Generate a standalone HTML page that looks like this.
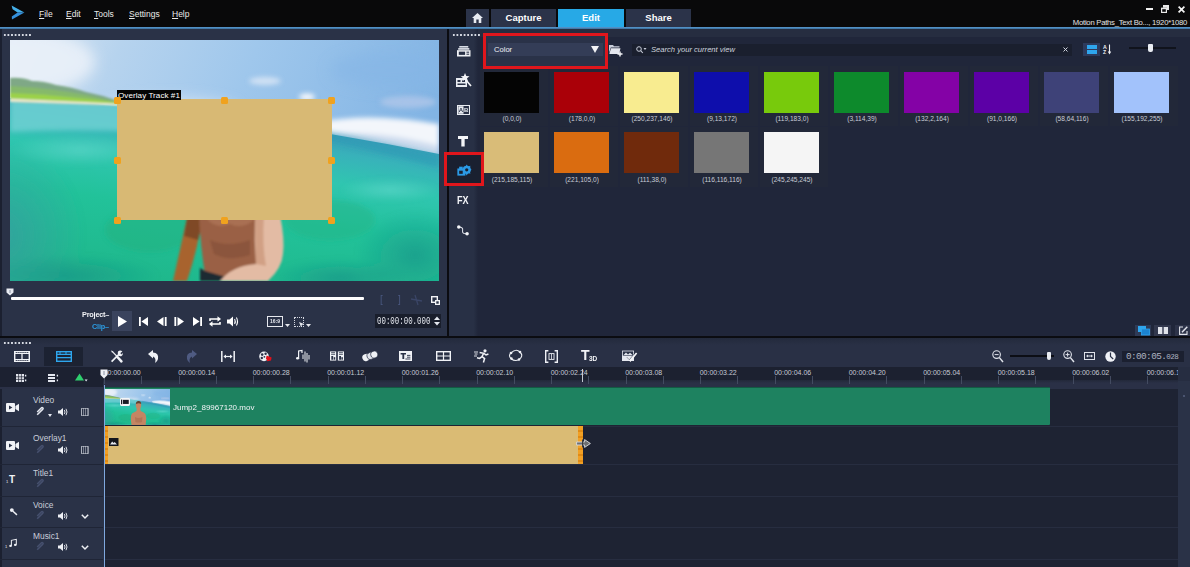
<!DOCTYPE html>
<html lang="en">
<head>
<meta charset="utf-8">
<title>Video Editor</title>
<style>
*{box-sizing:border-box;margin:0;padding:0}
html,body{width:1190px;height:567px;overflow:hidden;background:#1f2435;font-family:"Liberation Sans",sans-serif;color:#e8eaf0}
#app{position:relative;width:1190px;height:567px;overflow:hidden;background:#1f2435}
#app div,#app span,#app svg{position:absolute;white-space:nowrap}
#app svg{overflow:visible}
#top{left:0;top:0;width:1190px;height:28px;background:#09090a}
#topline{left:0;top:27px;width:1190px;height:2px;background:linear-gradient(#5a9bd2,#386d99)}
.menu{top:9px;font-size:8.5px;color:#e9e9e9;line-height:10px}
.menu u{text-decoration:underline}
.tab{top:9px;height:18px;background:#2b3349;color:#fff;font-size:9.5px;font-weight:bold;text-align:center;line-height:18px}
#prev{left:0;top:29px;width:448px;height:307px;background:#2a3247}
#lib{left:450px;top:29px;width:740px;height:307px;background:#20263a}
#side{left:-1px;top:0;width:29px;height:307px;background:linear-gradient(90deg,#283045 0,#283045 85%,#20263a 100%)}
#tl{left:0;top:338px;width:1190px;height:229px;background:#1e2333}
.grip{height:2px;width:29px;background-image:radial-gradient(circle,#d5d9e2 0.8px,rgba(213,217,226,0) 1.15px);background-size:3.6px 2px}
.cell{width:68px;height:60px;background:#222839}
.sw{width:55px;height:41px}
.swl{font-size:6.6px;color:#c9cdd7;text-align:center;width:70px;line-height:8px}
.tname{font-size:8.4px;color:#c9ced9;left:33px;line-height:9px;margin-top:1.5px}
.rt{top:3px;font-size:7px;color:#c6cad4;line-height:8px}
.tick{top:10px;width:1px;height:8px;background:#434b61}
.hline{left:104px;width:1074px;height:1px;background:#272d40}
.hd{width:7px;height:7px;background:#f0a21e;border-radius:1.5px;margin:-0.5px 0 0 -0.5px}
.lcd{font-family:"Liberation Mono",monospace;color:#c3c8d3}
</style>
</head>
<body>
<div id="app">

<div id="top">
<svg style="left:11px;top:5px" width="14" height="15" viewBox="0 0 14 15"><path d="M0.6 0.6 L13.4 7.4 L6.6 7.6 L1.6 4.2 Z" fill="#45b0ea"/><path d="M13.4 7.4 L1 14.6 L0.8 11.4 L6.6 7.6 Z" fill="#3590dc"/></svg>
<span class="menu" style="left:39px"><u>F</u>ile</span>
<span class="menu" style="left:66px"><u>E</u>dit</span>
<span class="menu" style="left:94px"><u>T</u>ools</span>
<span class="menu" style="left:129px"><u>S</u>ettings</span>
<span class="menu" style="left:172px"><u>H</u>elp</span>
<div class="tab" style="left:466px;width:23px"><svg style="left:6px;top:4px" width="11" height="10" viewBox="0 0 11 10"><path d="M5.5 0 L11 5 L9.3 5 L9.3 10 L6.7 10 L6.7 6.5 L4.3 6.5 L4.3 10 L1.7 10 L1.7 5 L0 5 Z" fill="#e8ebf2"/></svg></div>
<div class="tab" style="left:491px;width:65px">Capture</div>
<div class="tab" style="left:558px;width:66px;background:#27a9e6">Edit</div>
<div class="tab" style="left:626px;width:65px">Share</div>
<div style="left:1146px;top:8px;width:7px;height:2px;background:#f0f0f0"></div>
<svg style="left:1161px;top:5px" width="8" height="8" viewBox="0 0 8 8"><path d="M2 0 H8 V5 H6 V2.8 H2 Z" fill="#e8e8e8"/><rect x="0.6" y="3.4" width="4.8" height="4" fill="none" stroke="#e8e8e8" stroke-width="1.2"/><rect x="0" y="2.8" width="6" height="1.4" fill="#e8e8e8"/></svg>
<svg style="left:1178px;top:6px" width="7" height="7" viewBox="0 0 7 7"><path d="M0.6 0.6 L6.4 6.4 M6.4 0.6 L0.6 6.4" stroke="#f4f4f4" stroke-width="1.7"/></svg>
<span class="menu" style="right:3px;top:17.5px;font-size:7.7px;color:#e4e4e4;letter-spacing:-0.25px">Motion Paths_Text Bo..., 1920*1080</span>
</div>
<div id="topline"></div>

<div id="prev">
<div style="left:0;top:0;width:2px;height:307px;background:#1b2030"></div>
<div class="grip" style="left:3px;top:5px"></div>
<div id="video" style="left:10px;top:11px;width:429px;height:241px;overflow:hidden;background:#2fbfa5">
<svg class="scene" width="429" height="241" viewBox="0 0 429 241" preserveAspectRatio="none">
<defs>
<linearGradient id="skya" x1="0" y1="0" x2="1" y2="0.25"><stop offset="0" stop-color="#d9e5f2"/><stop offset="0.25" stop-color="#b6d3ee"/><stop offset="0.55" stop-color="#9fc7ec"/><stop offset="1" stop-color="#82b4e4"/></linearGradient>
<linearGradient id="seaa" gradientUnits="userSpaceOnUse" x1="215" y1="82" x2="193" y2="245"><stop offset="0" stop-color="#3a9fb8"/><stop offset="0.1" stop-color="#38b2ba"/><stop offset="0.28" stop-color="#30c6b0"/><stop offset="0.55" stop-color="#22c29a"/><stop offset="1" stop-color="#1fb88c"/></linearGradient>
<radialGradient id="lea" cx="0.5" cy="0.5" r="0.5"><stop offset="0" stop-color="#3f93a6" stop-opacity="0.6"/><stop offset="0.5" stop-color="#3f93a6" stop-opacity="0.3"/><stop offset="1" stop-color="#3f93a6" stop-opacity="0"/></radialGradient>
<filter id="bxa" x="-30%" y="-30%" width="160%" height="160%"><feGaussianBlur stdDeviation="7"/></filter>
<radialGradient id="dka" cx="0.5" cy="0.5" r="0.5"><stop offset="0" stop-color="#178a86" stop-opacity="0.55"/><stop offset="1" stop-color="#178a86" stop-opacity="0"/></radialGradient>
<radialGradient id="lta" cx="0.5" cy="0.5" r="0.5"><stop offset="0" stop-color="#63d8cc" stop-opacity="0.6"/><stop offset="1" stop-color="#63d8cc" stop-opacity="0"/></radialGradient>
<filter id="bla" x="-20%" y="-20%" width="140%" height="140%"><feGaussianBlur stdDeviation="2.4"/></filter>
<filter id="bsa" x="-20%" y="-20%" width="140%" height="140%"><feGaussianBlur stdDeviation="0.8"/></filter>
</defs>
<rect width="429" height="241" fill="url(#skya)"/>
<g filter="url(#bxa)">
<ellipse cx="10" cy="22" rx="75" ry="32" fill="#eaf1f8" opacity="0.9"/>
<ellipse cx="160" cy="72" rx="70" ry="14" fill="#dbe7f4" opacity="0.8"/>
<ellipse cx="380" cy="30" rx="60" ry="18" fill="#86b5e6" opacity="0.6"/>
</g>
<g filter="url(#bla)">
<ellipse cx="255" cy="41" rx="16" ry="4" fill="#dde8f6" opacity="0.8"/>
<ellipse cx="297" cy="57" rx="8" ry="3.5" fill="#f6f8fc"/>
<ellipse cx="398" cy="62" rx="28" ry="6" fill="#b5c9ea" opacity="0.7"/>
<path d="M310 82 Q360 72 429 84 L429 116 L322 96 Z" fill="#f3f6fb"/>
<path d="M322 93 Q380 92 429 106 L429 118 L322 99 Z" fill="#cddbee"/>
</g>
<path d="M0 58 Q210 70 429 114 L429 241 L0 241 Z" fill="url(#seaa)"/>
<g filter="url(#bla)">
<path d="M250 80 Q340 94 429 115 L429 128 Q340 104 250 88 Z" fill="#2c98b6" opacity="0.5"/>
<path d="M0 58 Q100 60 230 76 L230 100 Q100 86 0 92 Z" fill="#6ed0d2" opacity="0.85"/>
<ellipse cx="-10" cy="195" rx="85" ry="95" fill="url(#lea)"/>
<ellipse cx="60" cy="236" rx="90" ry="22" fill="url(#dka)"/>
<ellipse cx="405" cy="215" rx="60" ry="45" fill="url(#dka)"/>
<ellipse cx="330" cy="238" rx="70" ry="20" fill="url(#dka)"/>
<ellipse cx="70" cy="110" rx="70" ry="16" fill="url(#lta)"/>
<ellipse cx="380" cy="150" rx="50" ry="12" fill="url(#lta)"/>
<ellipse cx="140" cy="190" rx="45" ry="22" fill="#22b07c" opacity="0.45"/>
<ellipse cx="320" cy="180" rx="45" ry="20" fill="#22b486" opacity="0.45"/>
</g>
<g filter="url(#bsa)">
<path d="M0 38 Q12 37 22 41 Q34 41 46 45 Q62 47 76 52 Q92 55 108 61 L108 65 L0 62 Z" fill="#7fa886"/>
<path d="M0 46 Q40 48 76 55 L108 62 L108 64 L0 60 Z" fill="#86b96a"/>
<path d="M0 53 Q50 55 108 62.5 L108 64 L0 59.5 Z" fill="#9bd24a"/>
<path d="M0 58.5 L108 63.6 L108 65.4 L0 62 Z" fill="#e8e6cc"/>
</g>
<g filter="url(#bsa)">
<path d="M177 178 L192 178 Q189 205 177 241 L163 241 Q171 205 177 178 Z" fill="#a8642f"/><path d="M177 178 L192 178 Q191 190 188 200 L174 196 Z" fill="#6e3d22" opacity="0.7"/>
<path d="M189 175 L246 175 L246 241 L196 241 Q190 205 189 175 Z" fill="#9a6045"/>
<path d="M200 200 Q218 208 240 200 L240 215 Q220 222 204 214 Z" fill="#7f4a34" opacity="0.55"/><path d="M196 178 Q206 190 220 184 Q232 190 244 180 L244 176 L196 176 Z" fill="#b47a5c" opacity="0.6"/>
<path d="M190 228 L212 241 L190 241 Z" fill="#1d2a33"/>
<path d="M192 230 L230 241 L190 241 Z" fill="#1d2a33"/>
<path d="M245 175 L270 175 Q275 200 273 214 Q272 228 258 241 L210 241 Q222 226 246 224 Q244 200 245 175 Z" fill="#e3bba4"/>
<path d="M245 175 L254 175 Q252 205 256 226 L246 224 Z" fill="#c99478" opacity="0.7"/>
</g></svg>
</div>
<div style="left:117px;top:70px;width:215px;height:121px;background:#d8b974"></div>
<div style="left:117px;top:61px;width:64px;height:10px;background:#050505;color:#fff;font-size:8.1px;line-height:11px;padding-left:1px;letter-spacing:0.05px">Overlay Track #1</div>
<div class="hd" style="left:114px;top:68px"></div>
<div class="hd" style="left:221px;top:68px"></div>
<div class="hd" style="left:328px;top:68px"></div>
<div class="hd" style="left:114px;top:128px"></div>
<div class="hd" style="left:328px;top:128px"></div>
<div class="hd" style="left:114px;top:188px"></div>
<div class="hd" style="left:221px;top:188px"></div>
<div class="hd" style="left:328px;top:188px"></div>
<div style="left:11px;top:268px;width:353px;height:3px;background:#fdfdfd;border-radius:1px"></div>
<svg style="left:6px;top:259px" width="8" height="8" viewBox="0 0 8 8"><path d="M0.5 0.5 H7.5 V4.5 L4 7.5 L0.5 4.5 Z" fill="#e9ecf3"/><rect x="3.5" y="2" width="1" height="3" fill="#8a91a3"/></svg>
<span style="left:82px;top:281px;font-size:7.3px;font-weight:bold;color:#f2f3f6;line-height:9px;letter-spacing:-0.2px">Project–</span>
<span style="left:92px;top:293px;font-size:7.3px;font-weight:bold;color:#2c9be2;line-height:9px;letter-spacing:-0.2px">Clip–</span>
<div style="left:112px;top:282px;width:20px;height:20px;background:#3a435d"></div>
<svg style="left:118px;top:287px" width="9" height="11" viewBox="0 0 9 11"><path d="M0 0 L9 5.5 L0 11 Z" fill="#fff"/></svg>
<svg style="left:139px;top:288px" width="9" height="9" viewBox="0 0 9 9"><rect x="0" y="0" width="1.8" height="9" fill="#fff"/><path d="M9 0 L2.4 4.5 L9 9 Z" fill="#fff"/></svg>
<svg style="left:157px;top:288px" width="10" height="9" viewBox="0 0 10 9"><path d="M6.5 0 L0 4.5 L6.5 9 Z" fill="#fff"/><rect x="7.8" y="0" width="1.8" height="9" fill="#fff"/></svg>
<svg style="left:174px;top:288px" width="10" height="9" viewBox="0 0 10 9"><rect x="0.4" y="0" width="1.8" height="9" fill="#fff"/><path d="M3.5 0 L10 4.5 L3.5 9 Z" fill="#fff"/></svg>
<svg style="left:193px;top:288px" width="9" height="9" viewBox="0 0 9 9"><path d="M0 0 L6.6 4.5 L0 9 Z" fill="#fff"/><rect x="7.2" y="0" width="1.8" height="9" fill="#fff"/></svg>
<svg style="left:209px;top:287px" width="12" height="11" viewBox="0 0 12 11"><path d="M1 5 V3 H9" fill="none" stroke="#fff" stroke-width="1.6"/><path d="M8.5 0.3 L12 3 L8.5 5.7 Z" fill="#fff"/><path d="M11 6 V8 H3" fill="none" stroke="#fff" stroke-width="1.6"/><path d="M3.5 5.3 L0 8 L3.5 10.7 Z" fill="#fff"/></svg>
<svg style="left:227px;top:287px" width="12" height="11" viewBox="0 0 12 11"><path d="M0 3.5 H2.5 L6 0.5 V10.5 L2.5 7.5 H0 Z" fill="#fff"/><path d="M7.6 3 Q9 5.5 7.6 8 M9.4 1.5 Q11.6 5.5 9.4 9.5" fill="none" stroke="#fff" stroke-width="1.1"/></svg>
<div style="left:267px;top:287px;width:16px;height:11px;border:1px solid #e6e8ee;font-size:5px;line-height:9px;text-align:center;color:#e6e8ee;font-weight:bold">16:9</div>
<svg style="left:285px;top:295px" width="5" height="3" viewBox="0 0 5 3"><path d="M0 0 H5 L2.5 3 Z" fill="#e6e8ee"/></svg>
<div style="left:294px;top:288px;width:10px;height:10px;border:1px dotted #d5d9e2"></div>
<svg style="left:299px;top:293px" width="5" height="5" viewBox="0 0 5 5"><path d="M0 0 L5 2 L3 3 L2 5 Z" fill="#e6e8ee"/></svg>
<svg style="left:306px;top:295px" width="5" height="3" viewBox="0 0 5 3"><path d="M0 0 H5 L2.5 3 Z" fill="#e6e8ee"/></svg>
<span style="left:380px;top:265px;font-size:10px;line-height:12px;color:#4a5880">[</span>
<span style="left:398px;top:265px;font-size:10px;line-height:12px;color:#4a5880">]</span>
<svg style="left:411px;top:266px" width="11" height="10" viewBox="0 0 11 10"><path d="M0 4 L11 6 M4 0 L7 10" stroke="#3a4566" stroke-width="1.3"/></svg>
<svg style="left:431px;top:267px" width="9" height="9" viewBox="0 0 9 9"><rect x="0.7" y="0.7" width="5.6" height="5.6" fill="none" stroke="#f2f3f6" stroke-width="1.4"/><rect x="4" y="4" width="5" height="5" fill="#f2f3f6"/><rect x="5.3" y="5.3" width="2.4" height="2.4" fill="#2a3247"/></svg>
<div style="left:375px;top:285px;width:66px;height:14px;background:#191e2c"></div>
<span class="lcd" style="left:377px;top:286px;font-size:11.5px;line-height:12px;transform:scaleX(0.645);transform-origin:0 0;color:#e4e7ee">00:00:00.000</span>
<svg style="left:434px;top:287px" width="6" height="10" viewBox="0 0 6 10"><path d="M0 4 L3 0.5 L6 4 Z M0 6 L3 9.5 L6 6 Z" fill="#e4e7ee"/></svg>
</div>
<div style="left:447px;top:29px;width:2px;height:307px;background:#0b0c11"></div>
<div id="lib">
<div style="left:0;top:0;width:740px;height:8px;background:#262d40"></div>
<div id="side"></div>
<div class="grip" style="left:2px;top:5px"></div>
<svg style="left:159px;top:15px" width="14" height="13" viewBox="0 0 14 13"><path d="M0 1 H4 L5 2.2 H10.5 V3.5 H1.8 L0 9 Z" fill="#c9cedb"/><path d="M2 4.2 H11.5 L10 10 H0.3 Z" fill="#e4e7ef"/><path d="M11 7.5 V12.5 M8.5 10 H13.5" stroke="#f4f5f8" stroke-width="1.4"/></svg>
<div style="left:182px;top:15px;width:440px;height:12px;background:#1a1f2e"></div>
<svg style="left:186px;top:17px" width="11" height="8" viewBox="0 0 11 8"><circle cx="3" cy="3" r="2.3" fill="none" stroke="#c9cedb" stroke-width="1"/><path d="M4.7 4.7 L6.8 7" stroke="#c9cedb" stroke-width="1.1"/><path d="M7.5 2 H10.5 L9 4 Z" fill="#c9cedb"/></svg>
<span style="left:201px;top:16px;font-size:7.6px;line-height:10px;font-style:italic;color:#cfd3dd">Search your current view</span>
<svg style="left:613px;top:18px" width="5" height="5" viewBox="0 0 5 5"><path d="M0.5 0.5 L4.5 4.5 M4.5 0.5 L0.5 4.5" stroke="#cfd3dd" stroke-width="1"/></svg>
<div style="left:633px;top:14px;width:17px;height:13px;background:#2d3a5c"></div>
<div style="left:637px;top:16px;width:10px;height:4px;background:#2ea6ee"></div>
<div style="left:637px;top:21px;width:10px;height:4px;background:#2ea6ee"></div>
<svg style="left:653px;top:15px" width="9" height="11" viewBox="0 0 9 11"><text x="0" y="4.6" font-size="5.2" font-weight="bold" fill="#eef0f5" font-family="Liberation Sans, sans-serif">A</text><text x="0" y="10.4" font-size="5.2" font-weight="bold" fill="#eef0f5" font-family="Liberation Sans, sans-serif">Z</text><path d="M6.5 0.5 V9" stroke="#eef0f5" stroke-width="1.1"/><path d="M4.8 7.5 H8.2 L6.5 10.5 Z" fill="#eef0f5"/></svg>
<div style="left:679px;top:18px;width:47px;height:2px;background:#10131c"></div>
<div style="left:698px;top:15px;width:5px;height:8px;background:#e9ecf2;border-radius:1px 1px 2px 2px"></div>
<div class="cell" style="left:30px;top:37px"></div>
<div class="sw" style="left:34px;top:42.5px;background:#040404"></div>
<span class="swl" style="left:27px;top:85.5px">(0,0,0)</span>
<div class="cell" style="left:100px;top:37px"></div>
<div class="sw" style="left:104px;top:42.5px;background:#aa0008"></div>
<span class="swl" style="left:97px;top:85.5px">(178,0,0)</span>
<div class="cell" style="left:170px;top:37px"></div>
<div class="sw" style="left:174px;top:42.5px;background:#f8ec90"></div>
<span class="swl" style="left:167px;top:85.5px">(250,237,146)</span>
<div class="cell" style="left:240px;top:37px"></div>
<div class="sw" style="left:244px;top:42.5px;background:#0e0eac"></div>
<span class="swl" style="left:237px;top:85.5px">(9,13,172)</span>
<div class="cell" style="left:310px;top:37px"></div>
<div class="sw" style="left:314px;top:42.5px;background:#78ca0c"></div>
<span class="swl" style="left:307px;top:85.5px">(119,183,0)</span>
<div class="cell" style="left:380px;top:37px"></div>
<div class="sw" style="left:384px;top:42.5px;background:#0d8a2c"></div>
<span class="swl" style="left:377px;top:85.5px">(3,114,39)</span>
<div class="cell" style="left:450px;top:37px"></div>
<div class="sw" style="left:454px;top:42.5px;background:#8402a6"></div>
<span class="swl" style="left:447px;top:85.5px">(132,2,164)</span>
<div class="cell" style="left:520px;top:37px"></div>
<div class="sw" style="left:524px;top:42.5px;background:#5c00a6"></div>
<span class="swl" style="left:517px;top:85.5px">(91,0,166)</span>
<div class="cell" style="left:590px;top:37px"></div>
<div class="sw" style="left:594px;top:42.5px;background:#3e4278"></div>
<span class="swl" style="left:587px;top:85.5px">(58,64,116)</span>
<div class="cell" style="left:660px;top:37px"></div>
<div class="sw" style="left:664px;top:42.5px;background:#a2c2fb"></div>
<span class="swl" style="left:657px;top:85.5px">(155,192,255)</span>
<div class="cell" style="left:30px;top:98px"></div>
<div class="sw" style="left:34px;top:103px;background:#d9bc78"></div>
<span class="swl" style="left:27px;top:146.5px">(215,185,115)</span>
<div class="cell" style="left:100px;top:98px"></div>
<div class="sw" style="left:104px;top:103px;background:#da6c10"></div>
<span class="swl" style="left:97px;top:146.5px">(221,105,0)</span>
<div class="cell" style="left:170px;top:98px"></div>
<div class="sw" style="left:174px;top:103px;background:#702a0c"></div>
<span class="swl" style="left:167px;top:146.5px">(111,38,0)</span>
<div class="cell" style="left:240px;top:98px"></div>
<div class="sw" style="left:244px;top:103px;background:#767676"></div>
<span class="swl" style="left:237px;top:146.5px">(116,116,116)</span>
<div class="cell" style="left:310px;top:98px"></div>
<div class="sw" style="left:314px;top:103px;background:#f5f5f5"></div>
<span class="swl" style="left:307px;top:146.5px">(245,245,245)</span>
<div style="left:33px;top:4px;width:125px;height:36px;background:#2a3248;border:3px solid #e0161c"></div>
<div style="left:38px;top:14px;width:115px;height:13px;background:#343d57"></div>
<span style="left:44px;top:16px;font-size:7.6px;line-height:9px;color:#eef0f5">Color</span>
<svg style="left:141px;top:17px" width="8" height="7" viewBox="0 0 8 7"><path d="M0 0 H8 L4 7 Z" fill="#f2f3f6"/></svg>
<div style="left:-6px;top:123px;width:40px;height:34px;background:#1a2030;border:3px solid #e0161c"></div>
<svg style="left:6.5px;top:16.5px" width="13.5" height="10.5" viewBox="0 0 15 13" preserveAspectRatio="none"><rect x="2.5" y="0" width="10" height="2" fill="#d9dde6"/><rect x="1.3" y="2.6" width="12.4" height="2" fill="#e4e7ef"/><rect x="0" y="5.2" width="15" height="7.8" fill="#f0f2f6"/><rect x="2" y="7" width="7" height="4" fill="#283045"/><rect x="10.5" y="7" width="3" height="1.3" fill="#283045"/><rect x="10.5" y="9.5" width="3" height="1.3" fill="#283045"/></svg>
<svg style="left:6px;top:44px" width="15" height="14" viewBox="0 0 15 14"><rect x="0" y="5" width="11" height="9" fill="#e9ecf2"/><rect x="1.5" y="7" width="3" height="2" fill="#283045"/><rect x="6" y="7" width="3" height="2" fill="#283045"/><rect x="1.5" y="10.5" width="8" height="1.5" fill="#283045"/><path d="M9 0 L10.3 3 L13.5 3.2 L11 5.2 L12 8.4 L9 6.6 L6.4 8.2 L7.2 5.2 L4.8 3.2 L7.8 3 Z" fill="#f4f5f8"/><path d="M10 7 L15 13" stroke="#f4f5f8" stroke-width="1.6"/></svg>
<svg style="left:6.5px;top:76px" width="13" height="10" viewBox="0 0 15 12" preserveAspectRatio="none"><rect x="0.6" y="0.6" width="13.8" height="10.8" fill="none" stroke="#e9ecf2" stroke-width="1.2"/><rect x="1.5" y="1.5" width="6" height="9" fill="#e9ecf2"/><text x="2" y="9" font-size="7" font-weight="bold" fill="#283045" font-family="Liberation Sans, sans-serif">A</text><text x="8.2" y="9" font-size="7" font-weight="bold" fill="#e9ecf2" font-family="Liberation Sans, sans-serif">B</text></svg>
<svg style="left:8px;top:106.5px" width="10" height="10.5" viewBox="0 0 12 13" preserveAspectRatio="none"><path d="M0 0 H12 V3.6 H8 V13 H4 V3.6 H0 Z" fill="#f4f5f8"/></svg>
<svg style="left:6.5px;top:134.5px" width="15" height="12.5" viewBox="0 0 16 14"><rect x="0" y="5" width="9" height="8" fill="#2b9ae6"/><rect x="2" y="3" width="4" height="3" fill="#2b9ae6"/><circle cx="10.5" cy="6.5" r="4.6" fill="#2b9ae6"/><path d="M10.5 0.5 L12 3 H9 Z M16 6.5 L13.5 8 V5 Z M10.5 12.8 L9 10 H12 Z M14.6 2 L14 5 L12 3 Z M14.6 11 L12 10 L14 8 Z" fill="#2b9ae6"/><circle cx="10.5" cy="6.5" r="1.8" fill="#1a2030"/><rect x="2" y="7.5" width="4" height="3.5" fill="#1a2030"/></svg>
<span style="left:4px;top:165px;font-size:11.6px;font-weight:bold;color:#f4f5f8;line-height:12px;transform:scaleX(0.78);transform-origin:0 0;left:7px">FX</span>
<svg style="left:6.5px;top:196px" width="12" height="11" viewBox="0 0 15 13"><path d="M2 2 Q8 2 7 6.5 Q6 11 12.5 10.5" fill="none" stroke="#e4e7ef" stroke-width="1.3"/><circle cx="2.2" cy="2.2" r="2.2" fill="#f4f5f8"/><circle cx="12.6" cy="10.6" r="2.2" fill="#f4f5f8"/></svg>
<div style="left:685px;top:296px;width:16px;height:11px;background:#2e3a56"></div>
<svg style="left:688px;top:297px" width="12" height="9" viewBox="0 0 12 9"><rect x="0" y="0" width="8" height="6" fill="#2ea6ee"/><rect x="3.5" y="3" width="8" height="6" fill="#1b83d0" stroke="#2ea6ee" stroke-width="0.8"/></svg>
<div style="left:704px;top:296px;width:17px;height:11px;background:#31374d"></div>
<svg style="left:707.5px;top:298px" width="10" height="7" viewBox="0 0 10 7"><rect x="0" y="0" width="4.3" height="7" fill="#dfe2ea"/><rect x="5.7" y="0" width="4.3" height="7" fill="#dfe2ea"/></svg>
<div style="left:725px;top:296px;width:15px;height:11px;background:#2d3349"></div>
<svg style="left:729px;top:297px" width="9" height="9" viewBox="0 0 9 9"><path d="M4 1 H0.6 V8.4 H8 V5" fill="none" stroke="#dfe2ea" stroke-width="1.1"/><path d="M3 6.2 L8.3 0.8" stroke="#dfe2ea" stroke-width="1.5"/></svg>
</div>
<div style="left:0;top:336px;width:1190px;height:2px;background:#0b0c11"></div>
<div id="tl">
<div style="left:0;top:0;width:1190px;height:29px;background:linear-gradient(#232a3c,#293045 7px,#293045)"></div>
<div class="grip" style="left:3px;top:4px"></div>
<div style="left:44px;top:9px;width:39px;height:19px;background:#1c2232"></div>
<svg style="left:14px;top:13px" width="16" height="11" viewBox="0 0 16 11"><rect x="0.7" y="0.7" width="14.6" height="9.6" fill="none" stroke="#f0f2f6" stroke-width="1.4"/><path d="M8 2 V9" stroke="#f0f2f6" stroke-width="1.3"/><path d="M1 2.4 H15 M1 8.6 H15" stroke="#f0f2f6" stroke-width="1.1"/><path d="M2 1.5 H14 M2 9.5 H14" stroke="#293045" stroke-width="0.7" stroke-dasharray="1 1.2"/></svg>
<svg style="left:56px;top:13px" width="16" height="11" viewBox="0 0 16 11"><rect x="0.7" y="0.7" width="14.6" height="9.6" fill="none" stroke="#2ea6ee" stroke-width="1.4"/><path d="M1 3.3 H15 M1 6.6 H15" stroke="#2ea6ee" stroke-width="1.2"/><path d="M4 0.8 V3 M10 0.8 V3" stroke="#2ea6ee" stroke-width="1"/></svg>
<svg style="left:110px;top:12px" width="13" height="13" viewBox="0 0 13 13"><path d="M1.6 11.6 L9.4 3.8" stroke="#f0f2f6" stroke-width="1.7"/><path d="M8.2 1.2 Q10.4 -0.2 12.4 1.4 L10.4 3 L11.2 4.4 L12.8 3 Q13.2 5.4 11.2 6.2 Q9.4 6.6 8.2 5 Q7.2 3 8.2 1.2 Z" fill="#f0f2f6"/><path d="M2.4 1.6 L7.6 7" stroke="#f0f2f6" stroke-width="1.2"/><path d="M1 0.6 L3.4 1.2 L2 2.8 Z" fill="#f0f2f6"/><path d="M7.4 7 L11.4 11.4" stroke="#f0f2f6" stroke-width="2.6" stroke-linecap="round"/></svg>
<svg style="left:148px;top:12px" width="11" height="13" viewBox="0 0 11 13"><path d="M0 4 L5 0 V2.6 Q11 3 10 9 Q9.4 11.6 7 13 Q8.6 8 5 6.4 V8.4 Z" fill="#f0f2f6"/></svg>
<svg style="left:186px;top:12px" width="11" height="13" viewBox="0 0 11 13"><path d="M11 4 L6 0 V2.6 Q0 3 1 9 Q1.6 11.6 4 13 Q2.4 8 6 6.4 V8.4 Z" fill="#4f5b82"/></svg>
<svg style="left:221px;top:13px" width="14" height="11" viewBox="0 0 14 11"><path d="M0.8 0 V11 M13.2 0 V11" stroke="#f0f2f6" stroke-width="1.5"/><path d="M3.5 5.5 H10.5" stroke="#f0f2f6" stroke-width="1.2"/><path d="M2.4 5.5 L5 3.6 V7.4 Z M11.6 5.5 L9 3.6 V7.4 Z" fill="#f0f2f6"/></svg>
<svg style="left:258px;top:12px" width="14" height="13" viewBox="0 0 14 13"><circle cx="6" cy="6.4" r="4.8" fill="#eef0f5"/><circle cx="4.2" cy="4.6" r="1.3" fill="#2a3247"/><circle cx="7.6" cy="3.8" r="1.2" fill="#2a3247"/><circle cx="3.8" cy="8" r="1.2" fill="#2a3247"/><circle cx="6.4" cy="6.8" r="0.9" fill="#2a3247"/><path d="M8.6 5.6 L13.6 7.4 L13 10.6 L9.4 11.2 L8 8.6 Z" fill="#e0121c"/></svg>
<svg style="left:296px;top:12px" width="14" height="13" viewBox="0 0 14 13"><path d="M2.6 8 V1 L6 0.4 V3" fill="none" stroke="#f0f2f6" stroke-width="1.2"/><ellipse cx="1.6" cy="8.2" rx="1.6" ry="1.3" fill="#f0f2f6"/><path d="M7 4.5 V9 M9 1.5 V11.5 M11 3 V12.5 M13 5 V9.5" stroke="#f0f2f6" stroke-width="1"/></svg>
<svg style="left:329.5px;top:13px" width="14" height="10" viewBox="0 0 15 12" preserveAspectRatio="none"><rect x="0" y="0.5" width="6.6" height="11" fill="#f0f2f6"/><rect x="8.4" y="0.5" width="6.6" height="11" fill="#f0f2f6"/><path d="M1.2 2 H5.4 M1.2 4 H5.4 M9.6 2 H13.8 M9.6 4 H13.8" stroke="#2a3247" stroke-width="0.9"/><rect x="1.4" y="6" width="2" height="4.5" fill="#2a3247"/><rect x="4" y="7.4" width="1.6" height="3" fill="#2a3247"/><rect x="9.8" y="6" width="2" height="4.5" fill="#2a3247"/><rect x="12.2" y="7.4" width="1.6" height="3" fill="#2a3247"/></svg>
<svg style="left:362px;top:12px" width="16" height="12" viewBox="0 0 16 12"><g transform="rotate(-20 8 6)"><rect x="0" y="2.6" width="8" height="7" rx="3.5" fill="#f0f2f6"/><rect x="5" y="2.6" width="8" height="7" rx="3.5" fill="#dfe2ea" stroke="#2a3247" stroke-width="0.7"/><rect x="9" y="2.6" width="7" height="7" rx="3.5" fill="#f0f2f6" stroke="#2a3247" stroke-width="0.7"/></g></svg>
<svg style="left:399px;top:13px" width="13" height="10" viewBox="0 0 13 10"><rect x="0" y="0" width="13" height="10" fill="#f0f2f6"/><path d="M1.6 2 H7 V3.6 H5.2 V8 H3.4 V3.6 H1.6 Z" fill="#2a3247"/><path d="M8 4.4 H11.4 M8 6.2 H11.4 M6.4 8 H11.4" stroke="#2a3247" stroke-width="0.9"/></svg>
<svg style="left:436px;top:13px" width="15" height="10" viewBox="0 0 15 10"><rect x="0.7" y="0.7" width="13.6" height="8.6" fill="none" stroke="#f0f2f6" stroke-width="1.4"/><path d="M7.5 1 V9 M1 5 H14" stroke="#f0f2f6" stroke-width="1.2"/></svg>
<svg style="left:474px;top:11px" width="15" height="14" viewBox="0 0 15 14"><circle cx="11" cy="1.8" r="1.6" fill="#f0f2f6"/><path d="M5.6 3.4 L9.6 4.2 L8 7.6 L10.6 9.6 L9.4 13.4 M8 7.6 L5.6 9.4 L3 8.8 M9.6 4.2 L12 6 L14.4 5" fill="none" stroke="#f0f2f6" stroke-width="1.5"/><path d="M0 3 H4 M0.6 5 H3.6 M0 7 H3" stroke="#f0f2f6" stroke-width="0.9"/></svg>
<svg style="left:508px;top:11px" width="15" height="14" viewBox="0 0 15 14"><path d="M3 4 Q8 -1 12 3 Q16 7 11 10.5 Q7 13 3 9.5 Q0 6.5 3 4 Z" fill="none" stroke="#eef0f5" stroke-width="1.1"/><circle cx="3" cy="4" r="1.3" fill="#eef0f5"/><circle cx="12" cy="3" r="1.3" fill="#eef0f5"/><circle cx="11" cy="10.5" r="1.3" fill="#eef0f5"/><circle cx="3.4" cy="9.6" r="1.3" fill="#eef0f5"/></svg>
<svg style="left:545px;top:12px" width="13" height="13" viewBox="0 0 13 13"><path d="M3.4 0.7 H0.7 V12.3 H3.4 M9.6 0.7 H12.3 V12.3 H9.6" fill="none" stroke="#eef0f5" stroke-width="1.4"/><rect x="4" y="3.6" width="5" height="5.8" fill="none" stroke="#eef0f5" stroke-width="0.9"/><path d="M6.5 4 V9" stroke="#eef0f5" stroke-width="0.8"/></svg>
<span style="left:581px;top:10px;font-size:14px;font-weight:bold;line-height:15px;color:#f2f3f6">T</span>
<span style="left:589px;top:17px;font-size:6.5px;font-weight:bold;line-height:7px;color:#f2f3f6;letter-spacing:-0.2px">3D</span>
<svg style="left:622px;top:12px" width="15" height="12" viewBox="0 0 15 12"><rect x="0" y="0.6" width="12" height="10.4" fill="#e4e7ef"/><path d="M0.8 1.4 H11.2 V5.6 H0.8 Z" fill="#2a3247"/><path d="M1.6 5 L4 2.4 L6 4.4 L8 2.8 L10.6 5 Z" fill="#e4e7ef"/><path d="M6 8 L8.4 10.6 L14.6 3" fill="none" stroke="#f4f5f8" stroke-width="1.7"/><path d="M6 8 L8.4 10.6 L14.6 3" fill="none" stroke="#2a3247" stroke-width="0.5" transform="translate(-1.1 -0.8)"/></svg>
<svg style="left:992px;top:12px" width="12" height="13" viewBox="0 0 12 13"><circle cx="4.6" cy="4.6" r="3.8" fill="none" stroke="#dfe2ea" stroke-width="1.1"/><path d="M7.4 7.6 L11 12" stroke="#dfe2ea" stroke-width="1.5"/><path d="M2.6 4.6 H6.6" stroke="#dfe2ea" stroke-width="1"/></svg>
<div style="left:1010px;top:17px;width:44px;height:2px;background:#0c0e15"></div>
<div style="left:1047px;top:14px;width:4px;height:8px;background:#e9ecf2;border-radius:1px 1px 2px 2px"></div>
<svg style="left:1063px;top:12px" width="12" height="13" viewBox="0 0 12 13"><circle cx="4.6" cy="4.6" r="3.8" fill="none" stroke="#dfe2ea" stroke-width="1.1"/><path d="M7.4 7.6 L11 12" stroke="#dfe2ea" stroke-width="1.5"/><path d="M2.6 4.6 H6.6 M4.6 2.6 V6.6" stroke="#dfe2ea" stroke-width="1"/></svg>
<svg style="left:1084px;top:14px" width="11" height="8" viewBox="0 0 11 8"><rect x="0.5" y="0.5" width="10" height="7" fill="none" stroke="#dfe2ea" stroke-width="1"/><path d="M3 4 H8" stroke="#dfe2ea" stroke-width="1"/><path d="M2 4 L4 2.6 V5.4 Z M9 4 L7 2.6 V5.4 Z" fill="#dfe2ea"/></svg>
<svg style="left:1105px;top:13px" width="11" height="11" viewBox="0 0 11 11"><circle cx="5.5" cy="5.5" r="5.2" fill="#eef0f5"/><path d="M5.5 1.6 V5.5 L8.2 8" fill="none" stroke="#2a3247" stroke-width="1.2"/></svg>
<div style="left:1122px;top:13px;width:62px;height:11px;background:#1b2030"></div>
<span class="lcd" style="left:1126px;top:14px;font-size:9.4px;line-height:10px;letter-spacing:-0.6px;color:#aeb4c2">0:00:05.<span style="position:static;font-size:7.6px">028</span></span>
<div style="left:0;top:29px;width:1190px;height:13px;background:#1c2130"></div>
<div style="left:0;top:42px;width:1190px;height:9px;background:linear-gradient(#222839,#2a3046 3px)"></div>
<div style="left:0;top:29px;width:103px;height:20px;background:#1c2131"></div>
<svg style="left:16px;top:36px" width="11" height="8" viewBox="0 0 11 8"><rect x="0" y="0" width="8" height="8" fill="#e4e7ef"/><path d="M0 2.8 H8 M0 5.4 H8 M2.6 0 V8 M5.4 0 V8" stroke="#1c2131" stroke-width="0.7"/><path d="M9.6 0.8 V2.4 M9.6 5.6 V7.2" stroke="#e4e7ef" stroke-width="1.4"/></svg>
<svg style="left:48px;top:36px" width="11" height="8" viewBox="0 0 11 8"><rect x="0" y="0" width="7" height="2" fill="#e4e7ef"/><rect x="0" y="3" width="7" height="2" fill="#e4e7ef"/><rect x="0" y="6" width="7" height="2" fill="#e4e7ef"/><path d="M9.4 0.8 V2.4 M9.4 5.6 V7.2" stroke="#e4e7ef" stroke-width="1.3"/></svg>
<svg style="left:75px;top:35px" width="13" height="9" viewBox="0 0 13 9"><path d="M0 7.6 L4.5 0.4 L9 7.6 Z" fill="#2ecf6e"/><path d="M9.6 6.4 H12.6 L11.1 8.6 Z" fill="#e4e7ef"/></svg>
<span class="rt" style="left:103.7px;top:31px">00:00:00.00</span>
<div class="tick" style="left:104.0px;top:37.5px"></div>
<div class="tick" style="left:141.2px;top:37.5px"></div>
<span class="rt" style="left:178.2px;top:31px">00:00:00.14</span>
<div class="tick" style="left:178.5px;top:37.5px"></div>
<div class="tick" style="left:215.7px;top:37.5px"></div>
<span class="rt" style="left:252.7px;top:31px">00:00:00.28</span>
<div class="tick" style="left:253.0px;top:37.5px"></div>
<div class="tick" style="left:290.2px;top:37.5px"></div>
<span class="rt" style="left:327.2px;top:31px">00:00:01.12</span>
<div class="tick" style="left:327.5px;top:37.5px"></div>
<div class="tick" style="left:364.7px;top:37.5px"></div>
<span class="rt" style="left:401.7px;top:31px">00:00:01.26</span>
<div class="tick" style="left:402.0px;top:37.5px"></div>
<div class="tick" style="left:439.2px;top:37.5px"></div>
<span class="rt" style="left:476.2px;top:31px">00:00:02.10</span>
<div class="tick" style="left:476.5px;top:37.5px"></div>
<div class="tick" style="left:513.7px;top:37.5px"></div>
<span class="rt" style="left:550.7px;top:31px">00:00:02.24</span>
<div class="tick" style="left:551.0px;top:37.5px"></div>
<div class="tick" style="left:588.2px;top:37.5px"></div>
<span class="rt" style="left:625.2px;top:31px">00:00:03.08</span>
<div class="tick" style="left:625.5px;top:37.5px"></div>
<div class="tick" style="left:662.7px;top:37.5px"></div>
<span class="rt" style="left:699.7px;top:31px">00:00:03.22</span>
<div class="tick" style="left:700.0px;top:37.5px"></div>
<div class="tick" style="left:737.2px;top:37.5px"></div>
<span class="rt" style="left:774.2px;top:31px">00:00:04.06</span>
<div class="tick" style="left:774.5px;top:37.5px"></div>
<div class="tick" style="left:811.7px;top:37.5px"></div>
<span class="rt" style="left:848.7px;top:31px">00:00:04.20</span>
<div class="tick" style="left:849.0px;top:37.5px"></div>
<div class="tick" style="left:886.2px;top:37.5px"></div>
<span class="rt" style="left:923.2px;top:31px">00:00:05.04</span>
<div class="tick" style="left:923.5px;top:37.5px"></div>
<div class="tick" style="left:960.7px;top:37.5px"></div>
<span class="rt" style="left:997.7px;top:31px">00:00:05.18</span>
<div class="tick" style="left:998.0px;top:37.5px"></div>
<div class="tick" style="left:1035.2px;top:37.5px"></div>
<span class="rt" style="left:1072.2px;top:31px">00:00:06.02</span>
<div class="tick" style="left:1072.5px;top:37.5px"></div>
<div class="tick" style="left:1109.7px;top:37.5px"></div>
<span class="rt" style="left:1146.7px;top:31px">00:00:06.16</span>
<div class="tick" style="left:1147.0px;top:37.5px"></div>
<div class="tick" style="left:1184.2px;top:37.5px"></div>
<div style="left:1178px;top:29px;width:12px;height:22px;background:#262d41"></div>
<div style="left:582px;top:31px;width:1px;height:13px;background:#c3c8d3"></div>
<div style="left:0;top:51px;width:104px;height:178px;background:#2a3247"></div>
<div style="left:0;top:51px;width:2px;height:178px;background:#1b2030"></div>
<div style="left:0;top:88px;width:103px;height:1px;background:#1f2536"></div>
<div class="hline" style="top:88px"></div>
<div style="left:0;top:126px;width:103px;height:1px;background:#1f2536"></div>
<div class="hline" style="top:126px"></div>
<div style="left:0;top:158px;width:103px;height:1px;background:#1f2536"></div>
<div class="hline" style="top:158px"></div>
<div style="left:0;top:189px;width:103px;height:1px;background:#1f2536"></div>
<div class="hline" style="top:189px"></div>
<div style="left:0;top:221px;width:103px;height:1px;background:#1f2536"></div>
<div class="hline" style="top:221px"></div>
<div style="left:1178px;top:43px;width:12px;height:186px;background:#2a3247"></div>
<div style="left:1183px;top:57px;width:2px;height:2px;background:#4a5470"></div>
<svg style="left:6px;top:65px" width="13" height="9" viewBox="0 0 13 9"><rect x="0" y="0" width="9" height="9" rx="1" fill="#f0f2f6"/><path d="M9.4 3 L13 0.8 V8.2 L9.4 6 Z" fill="#f0f2f6"/><path d="M3 2.4 L6.4 4.5 L3 6.6 Z" fill="#2a3247"/></svg>
<span class="tname" style="top:56px">Video</span>
<svg style="left:36px;top:69px" width="9" height="9" viewBox="0 0 9 9"><path d="M1.2 7.8 L6.6 2.4 Q7.6 1.4 6.8 0.8 Q6 0.2 5 1.2 L1.2 5" fill="none" stroke="#e4e7ef" stroke-width="1.5"/></svg>
<svg style="left:48px;top:76px" width="4" height="3" viewBox="0 0 4 3"><path d="M0 0 H4 L2 3 Z" fill="#e4e7ef"/></svg>
<svg style="left:58px;top:70px" width="10" height="8" viewBox="0 0 10 8"><path d="M0 2.6 H2 L5 0 V8 L2 5.4 H0 Z" fill="#eef0f5"/><path d="M6.4 2 Q7.6 4 6.4 6 M8 0.8 Q10 4 8 7.2" fill="none" stroke="#eef0f5" stroke-width="0.9"/></svg>
<svg style="left:81px;top:70px" width="8" height="8" viewBox="0 0 8 8"><path d="M0 1 H8 M0 3 H8 M0 5 H8 M0 7 H8" stroke="#cfd3dc" stroke-width="1" stroke-dasharray="1 1"/><path d="M0.5 0.5 H7.5 V7.5 H0.5 Z" fill="none" stroke="#cfd3dc" stroke-width="0.6"/></svg>
<svg style="left:6px;top:103px" width="13" height="9" viewBox="0 0 13 9"><rect x="0" y="0" width="9" height="9" rx="1" fill="#f0f2f6"/><path d="M9.4 3 L13 0.8 V8.2 L9.4 6 Z" fill="#f0f2f6"/><path d="M3 2.4 L6.4 4.5 L3 6.6 Z" fill="#2a3247"/></svg>
<span class="tname" style="top:94px">Overlay1</span>
<svg style="left:36px;top:107px" width="9" height="9" viewBox="0 0 9 9"><path d="M1.2 7.8 L6.6 2.4 Q7.6 1.4 6.8 0.8 Q6 0.2 5 1.2 L1.2 5" fill="none" stroke="#46506e" stroke-width="1.5"/></svg>
<svg style="left:58px;top:108px" width="10" height="8" viewBox="0 0 10 8"><path d="M0 2.6 H2 L5 0 V8 L2 5.4 H0 Z" fill="#eef0f5"/><path d="M6.4 2 Q7.6 4 6.4 6 M8 0.8 Q10 4 8 7.2" fill="none" stroke="#eef0f5" stroke-width="0.9"/></svg>
<svg style="left:81px;top:108px" width="8" height="8" viewBox="0 0 8 8"><path d="M0 1 H8 M0 3 H8 M0 5 H8 M0 7 H8" stroke="#cfd3dc" stroke-width="1" stroke-dasharray="1 1"/><path d="M0.5 0.5 H7.5 V7.5 H0.5 Z" fill="none" stroke="#cfd3dc" stroke-width="0.6"/></svg>
<span style="left:6px;top:141px;font-size:4px;line-height:5px;color:#e4e7ef">1</span><span style="left:9px;top:136px;font-size:10px;font-weight:bold;line-height:11px;color:#f0f2f6">T</span>
<span class="tname" style="top:129px">Title1</span>
<svg style="left:36px;top:141px" width="9" height="9" viewBox="0 0 9 9"><path d="M1.2 7.8 L6.6 2.4 Q7.6 1.4 6.8 0.8 Q6 0.2 5 1.2 L1.2 5" fill="none" stroke="#46506e" stroke-width="1.5"/></svg>
<svg style="left:8.5px;top:170px" width="9.5" height="8" viewBox="0 0 10 10"><circle cx="2.6" cy="2.6" r="2.4" fill="#eef0f5"/><path d="M4 4 L9 8.6" stroke="#eef0f5" stroke-width="1.8"/></svg>
<span class="tname" style="top:161px">Voice</span>
<svg style="left:36px;top:173px" width="9" height="9" viewBox="0 0 9 9"><path d="M1.2 7.8 L6.6 2.4 Q7.6 1.4 6.8 0.8 Q6 0.2 5 1.2 L1.2 5" fill="none" stroke="#46506e" stroke-width="1.5"/></svg>
<svg style="left:58px;top:174px" width="10" height="8" viewBox="0 0 10 8"><path d="M0 2.6 H2 L5 0 V8 L2 5.4 H0 Z" fill="#eef0f5"/><path d="M6.4 2 Q7.6 4 6.4 6 M8 0.8 Q10 4 8 7.2" fill="none" stroke="#eef0f5" stroke-width="0.9"/></svg>
<svg style="left:81px;top:176px" width="8" height="5" viewBox="0 0 8 5"><path d="M0.8 0.8 L4 4 L7.2 0.8" fill="none" stroke="#eef0f5" stroke-width="1.5"/></svg>
<span style="left:5px;top:206px;font-size:4px;line-height:5px;color:#e4e7ef">1</span><svg style="left:8.5px;top:201px" width="8" height="8.5" viewBox="0 0 9 10"><path d="M2.6 8 V1.6 L8.4 0.4 V6.8" fill="none" stroke="#eef0f5" stroke-width="1.2"/><ellipse cx="1.6" cy="8.2" rx="1.6" ry="1.3" fill="#eef0f5"/><ellipse cx="7.2" cy="7" rx="1.6" ry="1.3" fill="#eef0f5"/></svg>
<span class="tname" style="top:192px">Music1</span>
<svg style="left:36px;top:204px" width="9" height="9" viewBox="0 0 9 9"><path d="M1.2 7.8 L6.6 2.4 Q7.6 1.4 6.8 0.8 Q6 0.2 5 1.2 L1.2 5" fill="none" stroke="#46506e" stroke-width="1.5"/></svg>
<svg style="left:58px;top:205px" width="10" height="8" viewBox="0 0 10 8"><path d="M0 2.6 H2 L5 0 V8 L2 5.4 H0 Z" fill="#eef0f5"/><path d="M6.4 2 Q7.6 4 6.4 6 M8 0.8 Q10 4 8 7.2" fill="none" stroke="#eef0f5" stroke-width="0.9"/></svg>
<svg style="left:81px;top:207px" width="8" height="5" viewBox="0 0 8 5"><path d="M0.8 0.8 L4 4 L7.2 0.8" fill="none" stroke="#eef0f5" stroke-width="1.5"/></svg>
<div style="left:104px;top:49px;width:946px;height:38px;background:#1e8260;border-top:1.5px solid #135a44;border-radius:1px"></div>
<div style="left:104px;top:50.5px;width:66px;height:36.5px;overflow:hidden;background:#30bfa8">
<svg class="scene" width="66" height="36" viewBox="0 0 429 241" preserveAspectRatio="none">
<defs>
<linearGradient id="skyb" x1="0" y1="0" x2="1" y2="0.25"><stop offset="0" stop-color="#d9e5f2"/><stop offset="0.25" stop-color="#b6d3ee"/><stop offset="0.55" stop-color="#9fc7ec"/><stop offset="1" stop-color="#82b4e4"/></linearGradient>
<linearGradient id="seab" gradientUnits="userSpaceOnUse" x1="215" y1="82" x2="193" y2="245"><stop offset="0" stop-color="#3a9fb8"/><stop offset="0.1" stop-color="#38b2ba"/><stop offset="0.28" stop-color="#30c6b0"/><stop offset="0.55" stop-color="#22c29a"/><stop offset="1" stop-color="#1fb88c"/></linearGradient>
<radialGradient id="leb" cx="0.5" cy="0.5" r="0.5"><stop offset="0" stop-color="#3f93a6" stop-opacity="0.6"/><stop offset="0.5" stop-color="#3f93a6" stop-opacity="0.3"/><stop offset="1" stop-color="#3f93a6" stop-opacity="0"/></radialGradient>
<filter id="bxb" x="-30%" y="-30%" width="160%" height="160%"><feGaussianBlur stdDeviation="7"/></filter>
<radialGradient id="dkb" cx="0.5" cy="0.5" r="0.5"><stop offset="0" stop-color="#178a86" stop-opacity="0.55"/><stop offset="1" stop-color="#178a86" stop-opacity="0"/></radialGradient>
<radialGradient id="ltb" cx="0.5" cy="0.5" r="0.5"><stop offset="0" stop-color="#63d8cc" stop-opacity="0.6"/><stop offset="1" stop-color="#63d8cc" stop-opacity="0"/></radialGradient>
<filter id="blb" x="-20%" y="-20%" width="140%" height="140%"><feGaussianBlur stdDeviation="2.4"/></filter>
<filter id="bsb" x="-20%" y="-20%" width="140%" height="140%"><feGaussianBlur stdDeviation="0.8"/></filter>
</defs>
<rect width="429" height="241" fill="url(#skyb)"/>
<g filter="url(#bxb)">
<ellipse cx="10" cy="22" rx="75" ry="32" fill="#eaf1f8" opacity="0.9"/>
<ellipse cx="160" cy="72" rx="70" ry="14" fill="#dbe7f4" opacity="0.8"/>
<ellipse cx="380" cy="30" rx="60" ry="18" fill="#86b5e6" opacity="0.6"/>
</g>
<g filter="url(#blb)">
<ellipse cx="255" cy="41" rx="16" ry="4" fill="#dde8f6" opacity="0.8"/>
<ellipse cx="297" cy="57" rx="8" ry="3.5" fill="#f6f8fc"/>
<ellipse cx="398" cy="62" rx="28" ry="6" fill="#b5c9ea" opacity="0.7"/>
<path d="M310 82 Q360 72 429 84 L429 116 L322 96 Z" fill="#f3f6fb"/>
<path d="M322 93 Q380 92 429 106 L429 118 L322 99 Z" fill="#cddbee"/>
</g>
<path d="M0 58 Q210 70 429 114 L429 241 L0 241 Z" fill="url(#seab)"/>
<g filter="url(#blb)">
<path d="M250 80 Q340 94 429 115 L429 128 Q340 104 250 88 Z" fill="#2c98b6" opacity="0.5"/>
<path d="M0 58 Q100 60 230 76 L230 100 Q100 86 0 92 Z" fill="#6ed0d2" opacity="0.85"/>
<ellipse cx="-10" cy="195" rx="85" ry="95" fill="url(#leb)"/>
<ellipse cx="60" cy="236" rx="90" ry="22" fill="url(#dkb)"/>
<ellipse cx="405" cy="215" rx="60" ry="45" fill="url(#dkb)"/>
<ellipse cx="330" cy="238" rx="70" ry="20" fill="url(#dkb)"/>
<ellipse cx="70" cy="110" rx="70" ry="16" fill="url(#ltb)"/>
<ellipse cx="380" cy="150" rx="50" ry="12" fill="url(#ltb)"/>
<ellipse cx="140" cy="190" rx="45" ry="22" fill="#22b07c" opacity="0.45"/>
<ellipse cx="320" cy="180" rx="45" ry="20" fill="#22b486" opacity="0.45"/>
</g>
<g filter="url(#bsb)">
<path d="M0 38 Q12 37 22 41 Q34 41 46 45 Q62 47 76 52 Q92 55 108 61 L108 65 L0 62 Z" fill="#7fa886"/>
<path d="M0 46 Q40 48 76 55 L108 62 L108 64 L0 60 Z" fill="#86b96a"/>
<path d="M0 53 Q50 55 108 62.5 L108 64 L0 59.5 Z" fill="#9bd24a"/>
<path d="M0 58.5 L108 63.6 L108 65.4 L0 62 Z" fill="#e8e6cc"/>
</g>
</svg>
<svg style="left:0;top:0" width="66" height="36" viewBox="0 0 66 36"><path d="M27.5 36 Q26 27 28 24.5 Q31 22.5 32.6 22 L32.6 19 Q31.6 17.6 31.8 15.4 Q32.2 12.6 34.6 12.6 Q37 12.6 37.2 15.4 Q37.4 17.8 36.4 19 L36.6 22 Q39 22.6 41 24.5 Q43 27 41.6 36 Z" fill="#c48563"/><path d="M31.8 15 Q32 12 34.6 12 Q37 12 37.2 15 Q35 13.6 31.8 15 Z" fill="#5a4030"/><path d="M31 28 Q34.5 30 38.4 28 L38 33 Q34.5 34 31.4 33 Z" fill="#a86a4c" opacity="0.6"/></svg>
</div>
<svg style="left:119.5px;top:60px" width="10" height="8" viewBox="0 0 8 7" preserveAspectRatio="none"><rect x="0" y="0" width="8" height="7" rx="1" fill="#f4f5f8"/><rect x="2.4" y="1.6" width="4.6" height="3.6" fill="#1a1d26"/><rect x="0.8" y="1.4" width="1" height="4" fill="#1a1d26"/></svg>
<span style="left:173px;top:65px;font-size:8px;line-height:9px;color:#f2f4f7">Jump2_89967120.mov</span>
<div style="left:104px;top:88px;width:479px;height:38px;background:#dabb74"></div>
<div style="left:104px;top:88px;width:4px;height:38px;background:repeating-linear-gradient(#f2a024 0 4px,#e08a14 4px 6px)"></div>
<div style="left:578px;top:88px;width:5px;height:38px;background:repeating-linear-gradient(#f2a024 0 4px,#e08a14 4px 6px)"></div>
<svg style="left:109px;top:100px" width="9.5" height="8" viewBox="0 0 9 7" preserveAspectRatio="none"><rect x="0" y="0" width="9" height="7" fill="#14161c"/><path d="M1 5.6 L3 3 L4.4 4.4 L5.4 3.6 L7.6 5.6 Z" fill="#e6e8ee"/></svg>
<svg style="left:576px;top:101px" width="15" height="9" viewBox="0 0 15 9"><path d="M0.6 3 H8.6 V0.6 L14.4 4.5 L8.6 8.4 V6 H0.6 Z" fill="#6d6f72" stroke="#d9dbe0" stroke-width="0.9"/><path d="M6.6 0.4 V8.6" stroke="#3a3c40" stroke-width="1.2"/></svg>
<div style="left:104px;top:47px;width:1px;height:182px;background:#7fa8de"></div>
<svg style="left:100px;top:31px" width="8" height="10" viewBox="0 0 8 10"><path d="M0.5 0.5 H7.5 V6 L4 9.5 L0.5 6 Z" fill="#eef0f5"/><rect x="3.5" y="2" width="1" height="4" fill="#8a91a3"/></svg>
</div>
</div>
</body>
</html>
